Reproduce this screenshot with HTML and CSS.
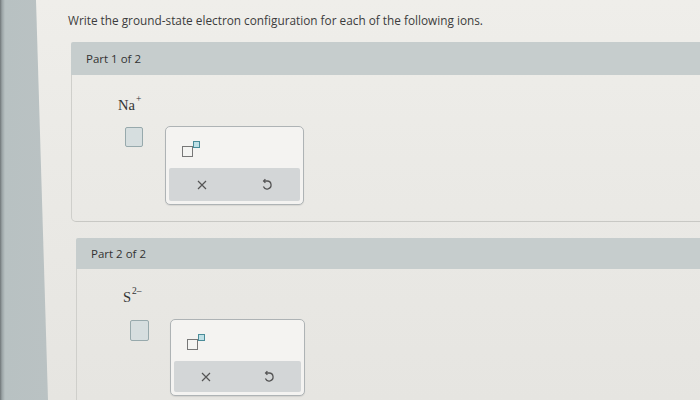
FILE: index.html
```html
<!DOCTYPE html>
<html>
<head>
<meta charset="utf-8">
<link rel="stylesheet" href="styles.css">
</head>
<body>
<div class="page">
  <div class="sidebar"></div>
  <div class="main">
    <div class="title">Write the ground-state electron configuration for each of the following ions.</div>

    <div class="part part1">
      <div class="part-head">Part 1 of 2</div>
      <div class="part-body">
        <div class="ion">Na<sup>+</sup></div>
        <div class="row">
          <div class="answer"></div>
          <div class="popup">
            <div class="popup-top">
              <svg class="sup-icon" width="20" height="20" viewBox="0 0 20 20">
                <rect x="1.5" y="7.5" width="10" height="10" fill="#f4f4f2" stroke="#777" stroke-width="1"/>
                <rect x="12.5" y="2.5" width="6" height="6" fill="#bfe0e6" stroke="#4a8c99" stroke-width="1"/>
              </svg>
            </div>
            <div class="popup-bar">
              <div class="cell">
                <svg width="12" height="12" viewBox="0 0 12 12"><path d="M2 2 L10 10 M10 2 L2 10" stroke="#555" stroke-width="1.2" fill="none"/></svg>
              </div>
              <div class="cell">
                <svg width="14" height="14" viewBox="0 0 14 14"><path d="M4 3 H7.2 A4 4 0 1 1 3.4 8.6" stroke="#555" stroke-width="1.3" fill="none"/><path d="M5.4 1.2 L3.6 3 L5.4 4.8" stroke="#555" stroke-width="1.3" fill="none"/></svg>
              </div>
            </div>
          </div>
        </div>
      </div>
    </div>

    <div class="part part2">
      <div class="part-head">Part 2 of 2</div>
      <div class="part-body">
        <div class="ion">S<sup>2&#8211;</sup></div>
        <div class="row">
          <div class="answer"></div>
          <div class="popup">
            <div class="popup-top">
              <svg class="sup-icon" width="20" height="20" viewBox="0 0 20 20">
                <rect x="1.5" y="7.5" width="10" height="10" fill="#f4f4f2" stroke="#777" stroke-width="1"/>
                <rect x="12.5" y="2.5" width="6" height="6" fill="#bfe0e6" stroke="#4a8c99" stroke-width="1"/>
              </svg>
            </div>
            <div class="popup-bar">
              <div class="cell">
                <svg width="12" height="12" viewBox="0 0 12 12"><path d="M2 2 L10 10 M10 2 L2 10" stroke="#555" stroke-width="1.2" fill="none"/></svg>
              </div>
              <div class="cell">
                <svg width="14" height="14" viewBox="0 0 14 14"><path d="M4 3 H7.2 A4 4 0 1 1 3.4 8.6" stroke="#555" stroke-width="1.3" fill="none"/><path d="M5.4 1.2 L3.6 3 L5.4 4.8" stroke="#555" stroke-width="1.3" fill="none"/></svg>
              </div>
            </div>
          </div>
        </div>
      </div>
    </div>
  </div>
</div>
</body>
</html>
```
FILE: styles.css
```css
html, body {
  margin: 0;
  padding: 0;
  width: 700px;
  height: 400px;
  overflow: hidden;
  background: #e9e8e4;
}

.page {
  display: flex;
  width: 700px;
  height: 400px;
  background: linear-gradient(180deg, #efeeea 0%, #ebeae6 40%, #e6e5e1 100%);
  font-family: "Open Sans", "Liberation Sans", sans-serif;
}

.sidebar {
  width: 48px;
  flex: none;
  background: linear-gradient(90deg, #6f7577 0px, #9aa3a5 2px, #b8c1c2 5px, #bac2c3 100%);
  clip-path: polygon(0 0, 36px 0, 48px 100%, 0 100%);
}

.main {
  flex: 1;
  margin-left: -8px;
  padding-top: 11px;
  padding-left: 28px;
}

.title {
  font-size: 11.8px;
  color: #3c3c3c;
  line-height: 18px;
  height: 18px;
}

.part {
  display: flex;
  flex-direction: column;
}

.part1 {
  margin-top: 13px;
  margin-left: 3px;
}

.part2 {
  margin-top: 16px;
  margin-left: 8px;
}

.part-head {
  background: #c6cdcd;
  height: 33px;
  display: flex;
  align-items: center;
  padding-left: 15px;
  font-size: 11.5px;
  color: #333;
  border-radius: 2px 0 0 0;
}

.part2 .part-head {
  height: 31px;
  padding-left: 15px;
}

.part-body {
  border-left: 1px solid #cfcfcb;
  border-bottom: 1px solid #c8c8c4;
  border-radius: 0 0 0 5px;
  height: 146px;
}

.part2 .part-body {
  border-bottom: none;
  height: 140px;
}

.ion {
  font-family: "Liberation Serif", "Times New Roman", serif;
  font-size: 14.5px;
  color: #333;
  padding-left: 46px;
  margin-top: 19px;
  height: 22px;
  line-height: 22px;
}

.part2 .ion {
  padding-left: 46px;
  margin-top: 17px;
}

.ion sup {
  font-size: 9.5px;
  vertical-align: 8px;
  line-height: 0;
  margin-left: 1px;
}

.row {
  display: flex;
  margin-top: 10px;
}

.part2 .row {
  margin-top: 11px;
}

.answer {
  width: 16px;
  height: 18px;
  margin-left: 53px;
  margin-top: 1px;
  background: #d6dedf;
  border: 1.5px solid #97a9ac;
  border-radius: 2px;
  flex: none;
}

.part2 .answer {
  width: 17px;
  height: 19px;
}

.popup {
  margin-left: 22px;
  width: 137px;
  height: 77px;
  background: #f4f3f1;
  border: 1px solid #aeb3b5;
  border-radius: 5px;
  box-shadow: 0 1px 1px rgba(0,0,0,0.08);
  display: flex;
  flex-direction: column;
  flex: none;
}

.part2 .popup {
  margin-left: 21px;
  width: 133px;
  height: 75px;
}

.popup-top {
  height: 41px;
  padding-left: 15px;
  padding-top: 12px;
  box-sizing: border-box;
}

.sup-icon {
  display: block;
}

.popup-bar {
  margin: 0 3px 3px 3px;
  flex: 1;
  background: #d3d6d7;
  border-radius: 2px;
  display: flex;
}

.cell {
  flex: 1;
  display: flex;
  align-items: center;
  justify-content: center;
}

.cell svg {
  display: block;
}
```
